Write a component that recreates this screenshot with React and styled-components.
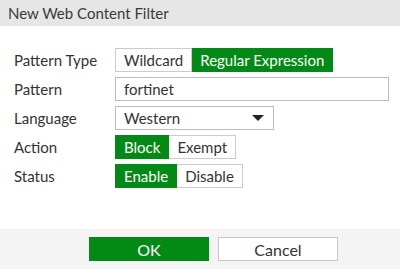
import React, { useState } from 'react';
import styled, { createGlobalStyle } from 'styled-components';

const GREEN = '#038a16';

const GlobalStyle = createGlobalStyle`
  html, body {
    margin: 0;
    padding: 0;
    background: #fff;
  }
  body {
    font-family: Lato, "Open Sans", sans-serif;
    color: #333;
    overflow: hidden;
  }
`;

const Dialog = styled.div`
  width: 400px;
  height: 269px;
  display: flex;
  flex-direction: column;
  background: #fff;
`;

const TitleBar = styled.div`
  height: 26px;
  background: #e6e6e6;
  display: flex;
  align-items: center;
  padding-left: 8px;
  font-size: 15px;
  color: #3a3a3a;
`;

const Body = styled.div`
  padding: 22px 0 0 14px;
  display: grid;
  grid-template-columns: 101px auto;
  grid-auto-rows: 24px;
  row-gap: 5px;
  align-items: center;
`;

const Label = styled.div`
  font-size: 15px;
  color: #333;
`;

const Segments = styled.div`
  display: flex;
  height: 24px;
`;

const Segment = styled.button`
  font-family: inherit;
  font-size: 15px;
  height: 24px;
  padding: 0 8px;
  margin: 0;
  border: 1px solid ${p => (p.active ? GREEN : '#cccccc')};
  background: ${p => (p.active ? GREEN : '#fff')};
  color: ${p => (p.active ? '#fff' : '#333')};
  cursor: pointer;
  & + & {
    border-left: none;
  }
`;

const TextInput = styled.input`
  box-sizing: border-box;
  width: 274px;
  height: 24px;
  border: 1px solid #bdbdbd;
  padding: 0 8px;
  font-family: inherit;
  font-size: 15px;
  color: #333;
  outline: none;
`;

const Select = styled.div`
  box-sizing: border-box;
  width: 159px;
  height: 24px;
  border: 1px solid #bdbdbd;
  padding: 0 8px;
  display: flex;
  align-items: center;
  justify-content: space-between;
  font-size: 15px;
`;

const Caret = styled.span`
  width: 0;
  height: 0;
  border-left: 6px solid transparent;
  border-right: 6px solid transparent;
  border-top: 6px solid #222;
  margin-right: 1px;
`;

const Footer = styled.div`
  margin-top: auto;
  height: 40px;
  background: #f4f4f4;
  display: flex;
  align-items: center;
  padding-left: 89px;
  gap: 9px;
`;

const FooterButton = styled.button`
  box-sizing: border-box;
  width: 120px;
  height: 24px;
  font-family: inherit;
  font-size: 16px;
  border: 1px solid ${p => (p.primary ? GREEN : '#c8c8c8')};
  background: ${p => (p.primary ? GREEN : '#fff')};
  color: ${p => (p.primary ? '#fff' : '#333')};
  cursor: pointer;
`;

const SegmentGroup = ({ options, value, onChange }) => (
  <Segments>
    {options.map(opt => (
      <Segment key={opt} active={value === opt} onClick={() => onChange(opt)}>
        {opt}
      </Segment>
    ))}
  </Segments>
);

export default function App() {
  const [patternType, setPatternType] = useState('Regular Expression');
  const [action, setAction] = useState('Block');
  const [status, setStatus] = useState('Enable');
  const [pattern, setPattern] = useState('fortinet');

  return (
    <Dialog>
      <GlobalStyle />
      <TitleBar>New Web Content Filter</TitleBar>
      <Body>
        <Label>Pattern Type</Label>
        <SegmentGroup
          options={['Wildcard', 'Regular Expression']}
          value={patternType}
          onChange={setPatternType}
        />
        <Label>Pattern</Label>
        <TextInput value={pattern} onChange={e => setPattern(e.target.value)} />
        <Label>Language</Label>
        <Select>
          Western
          <Caret />
        </Select>
        <Label>Action</Label>
        <SegmentGroup options={['Block', 'Exempt']} value={action} onChange={setAction} />
        <Label>Status</Label>
        <SegmentGroup options={['Enable', 'Disable']} value={status} onChange={setStatus} />
      </Body>
      <Footer>
        <FooterButton primary>OK</FooterButton>
        <FooterButton>Cancel</FooterButton>
      </Footer>
    </Dialog>
  );
}
